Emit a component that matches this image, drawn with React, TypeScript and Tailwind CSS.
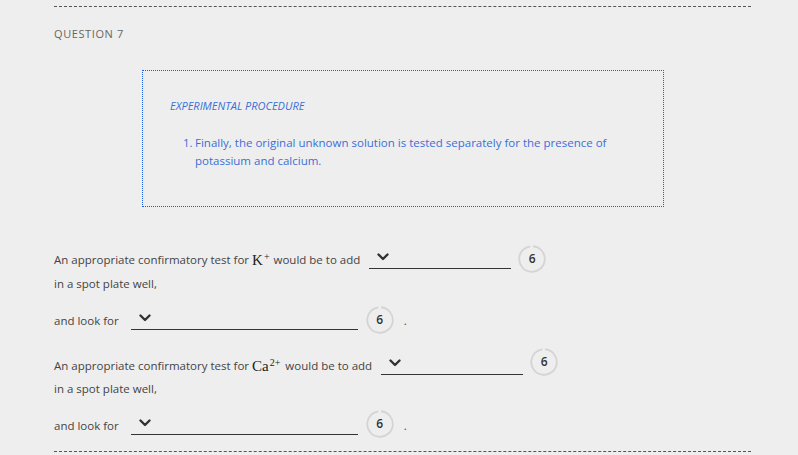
import React from "react";

function Chevron() {
  return (
    <svg width="12" height="8" viewBox="0 0 12 8" className="shrink-0">
      <polyline points="1.5,1.5 6,6 10.5,1.5" fill="none" stroke="#333" strokeWidth="2.4" strokeLinecap="round" strokeLinejoin="round" />
    </svg>
  );
}

function Badge() {
  return (
    <div className="relative w-[28px] h-[28px] shrink-0 flex items-center justify-center">
      <svg width="28" height="28" viewBox="0 0 28 28" className="absolute inset-0">
        <circle cx="14" cy="14" r="12.8" fill="none" stroke="#d4d4d4" strokeWidth="1.8" strokeDasharray="77 3.5" transform="rotate(-85 14 14)" />
      </svg>
      <span className="relative text-[12px] font-semibold text-[#333]">6</span>
    </div>
  );
}

function Dropdown({ w }: { w: string }) {
  return (
    <div className={`${w} h-[18px] border-b border-[#333] flex items-start pl-[8px] pt-[2px]`}>
      <Chevron />
    </div>
  );
}

function Ion({ base, sup, cls }: { base: string; sup: string; cls: string }) {
  return (
    <span className={`inline-flex items-start font-['Liberation_Serif','DejaVu_Serif',serif] text-[15px] leading-[18px] text-[#222] ${cls}`}>
      <span>{base}</span>
      <span className="text-[10px] leading-[10px] ml-[1px] mt-[1px] font-light">{sup}</span>
    </span>
  );
}

export default function App() {
  return (
    <div className="w-[798px] h-[455px] bg-[#eeeeee] font-['Open_Sans','Noto_Sans',sans-serif] text-[#444] text-[11.5px] overflow-hidden pt-[6px]">
      <div className="ml-[54px] w-[697px]">
        <div className="border-t border-dashed border-[#555]" />
        <div className="mt-[19px] h-[16px] leading-[16px] text-[11px] tracking-[0.6px] text-[#666]">QUESTION 7</div>
        <div className="mt-[28px] ml-[88px] w-[522px] h-[137px] border border-dotted border-[#1f5fe8] pt-[27px] pl-[27px]">
          <div className="h-[16px] leading-[16px] italic text-[#3a6fd8] text-[11px]">EXPERIMENTAL PROCEDURE</div>
          <div className="mt-[20px] flex text-[#3a6fd8] leading-[18px]">
            <span className="ml-[13px] w-[12px]">1.</span>
            <span className="w-[440px]">Finally, the original unknown solution is tested separately for the presence of potassium and calcium.</span>
          </div>
        </div>

        <div className="mt-[38px] h-[30px] flex items-center">
          <span>An appropriate confirmatory test for</span>
          <Ion base="K" sup="+" cls="ml-[3px] mr-[4px]" />
          <span>would be to add</span>
          <div className="ml-[9px]"><Dropdown w="w-[142px]" /></div>
          <div className="ml-[7px] -mt-[2px]"><Badge /></div>
        </div>
        <div className="h-[18px] leading-[18px]">in a spot plate well,</div>
        <div className="mt-[13px] h-[30px] flex items-center">
          <span>and look for</span>
          <div className="ml-[12px]"><Dropdown w="w-[227px]" /></div>
          <div className="ml-[8px] -mt-[3px]"><Badge /></div>
          <span className="ml-[10px]">.</span>
        </div>

        <div className="mt-[16px] h-[28px] flex items-center">
          <span>An appropriate confirmatory test for</span>
          <Ion base="Ca" sup="2+" cls="ml-[3px] mr-[5px]" />
          <span>would be to add</span>
          <div className="ml-[9px]"><Dropdown w="w-[142px]" /></div>
          <div className="ml-[7px] -mt-[8px]"><Badge /></div>
        </div>
        <div className="h-[18px] leading-[18px]">in a spot plate well,</div>
        <div className="mt-[13px] h-[30px] flex items-center">
          <span>and look for</span>
          <div className="ml-[12px]"><Dropdown w="w-[227px]" /></div>
          <div className="ml-[8px] -mt-[5px]"><Badge /></div>
          <span className="ml-[10px]">.</span>
        </div>
        <div className="mt-[10px] border-t border-dashed border-[#555]" />
      </div>
    </div>
  );
}
